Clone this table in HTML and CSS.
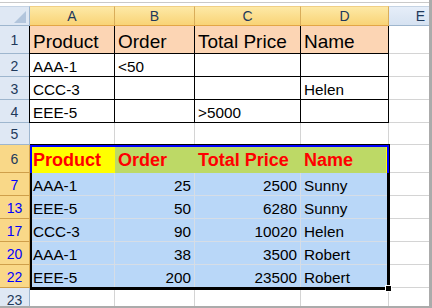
FILE: index.html
```html
<!DOCTYPE html>
<html>
<head>
<meta charset="utf-8">
<link rel="stylesheet" href="styles.css">
</head>
<body>
<div class="frame">
<div class="sheet">
  <div class="topstrip"></div>

  <div class="corner"><span class="tri"></span></div>
  <div class="ch sel">A</div>
  <div class="ch sel">B</div>
  <div class="ch sel">C</div>
  <div class="ch sel">D</div>
  <div class="ch">E</div>

  <div class="rh">1</div>
  <div class="c big peach bl bx">Product</div>
  <div class="c big peach bx">Order</div>
  <div class="c big peach bx">Total Price</div>
  <div class="c big peach bx">Name</div>
  <div class="c"></div>

  <div class="rh">2</div>
  <div class="c bl bx">AAA-1</div>
  <div class="c bx">&lt;50</div>
  <div class="c bx"></div>
  <div class="c bx"></div>
  <div class="c"></div>

  <div class="rh">3</div>
  <div class="c bl bx">CCC-3</div>
  <div class="c bx"></div>
  <div class="c bx"></div>
  <div class="c bx">Helen</div>
  <div class="c"></div>

  <div class="rh">4</div>
  <div class="c bl bx">EEE-5</div>
  <div class="c bx"></div>
  <div class="c bx">&gt;5000</div>
  <div class="c bx"></div>
  <div class="c"></div>

  <div class="rh">5</div>
  <div class="c"></div>
  <div class="c"></div>
  <div class="c"></div>
  <div class="c"></div>
  <div class="c"></div>

  <div class="rh gold">6</div>
  <div class="c head yellow">Product</div>
  <div class="c head green">Order</div>
  <div class="c head green">Total Price</div>
  <div class="c head green">Name</div>
  <div class="c"></div>

  <div class="rh gold filt">7</div>
  <div class="c blue">AAA-1</div>
  <div class="c blue num">25</div>
  <div class="c blue num">2500</div>
  <div class="c blue">Sunny</div>
  <div class="c"></div>

  <div class="rh gold filt">13</div>
  <div class="c blue">EEE-5</div>
  <div class="c blue num">50</div>
  <div class="c blue num">6280</div>
  <div class="c blue">Sunny</div>
  <div class="c"></div>

  <div class="rh gold filt">17</div>
  <div class="c blue">CCC-3</div>
  <div class="c blue num">90</div>
  <div class="c blue num">10020</div>
  <div class="c blue">Helen</div>
  <div class="c"></div>

  <div class="rh gold filt">20</div>
  <div class="c blue">AAA-1</div>
  <div class="c blue num">38</div>
  <div class="c blue num">3500</div>
  <div class="c blue">Robert</div>
  <div class="c"></div>

  <div class="rh gold filt">22</div>
  <div class="c blue">EEE-5</div>
  <div class="c blue num">200</div>
  <div class="c blue num">23500</div>
  <div class="c blue">Robert</div>
  <div class="c"></div>

  <div class="rh">23</div>
  <div class="c"></div>
  <div class="c"></div>
  <div class="c"></div>
  <div class="c"></div>
  <div class="c"></div>

  <div class="selbox"><span class="handle"></span></div>
  <div class="hdrbox"></div>
</div>
</div>
</body>
</html>
```

FILE: styles.css
```css
html, body {
  margin: 0;
  padding: 0;
  background: #ffffff;
}
.frame {
  width: 429px;
  height: 306px;
  overflow: hidden;
  border-right: 3px solid #ababab;
  border-bottom: 2px solid #ababab;
  background: #ffffff;
}
.sheet {
  position: relative;
  display: grid;
  grid-template-columns: 30px 85px 80px 106px 88px 64px;
  grid-template-rows: 6px 20px 28px 23px 23px 23px 22px 28px 23px 23px 23px 23px 23px 24px;
  font-family: "Liberation Sans", Arial, sans-serif;
  color: #000000;
}
.topstrip {
  grid-column: 1 / 7;
  border-top: 1px solid #ffffff;
  border-bottom: 1px solid #c9c9c9;
  height: 1px;
  box-sizing: content-box;
}
.corner {
  background: #dfe8f4;
  border-right: 1px solid #9eb6ce;
  border-bottom: 1px solid #9eb6ce;
  border-top: 1px solid #c5d3e3;
  box-sizing: border-box;
  display: flex;
  justify-content: flex-end;
  align-items: flex-end;
  padding: 0 3px 2px 0;
}
.tri {
  width: 0;
  height: 0;
  border-left: 12px solid transparent;
  border-bottom: 12px solid #b2c5dc;
}
.ch {
  box-sizing: border-box;
  background: linear-gradient(#e6eef9, #d6e2f1);
  border-right: 1px solid #9eb6ce;
  border-bottom: 1px solid #9eb6ce;
  border-top: 1px solid #c5d3e3;
  color: #1e395b;
  font-size: 14px;
  display: flex;
  align-items: center;
  justify-content: center;
}
.ch.sel {
  background: linear-gradient(#fde9a6, #f9d376);
  border-right-color: #d9ad5a;
  border-bottom-color: #e3a646;
  border-top-color: #f0cf85;
}
.rh {
  box-sizing: border-box;
  background: #dfe8f4;
  border-right: 1px solid #9eb6ce;
  border-bottom: 1px solid #9eb6ce;
  color: #1e395b;
  font-size: 14px;
  display: flex;
  align-items: center;
  justify-content: center;
  padding-top: 1px;
}
.rh.gold {
  background: #f9d888;
  border-right-color: #d9a94e;
  border-bottom-color: #cf9f4a;
}
.rh.filt {
  color: #0000ff;
}
.c {
  box-sizing: border-box;
  border-right: 1px solid #d4d4d4;
  border-bottom: 1px solid #d4d4d4;
  font-size: 15.3px;
  line-height: 1;
  display: flex;
  align-items: flex-end;
  padding: 0 3px 2px 3px;
  white-space: nowrap;
  overflow: hidden;
}
.c.big {
  font-size: 19px;
  padding-bottom: 2px;
}
.c.bx {
  border-right-color: #000000;
  border-bottom-color: #000000;
}
.c.bl {
  box-shadow: -1px 0 0 #000000;
}
.peach {
  background: #fcd5b4;
}
.c.head {
  font-size: 18px;
  font-weight: bold;
  color: #ff0000;
  padding-bottom: 3px;
  border-color: transparent;
}
.yellow {
  background: #ffff00;
}
.green {
  background: #bdd966;
}
.c.blue {
  background: #b9d7f8;
  border-right-color: #d6dde6;
  border-bottom-color: #d6dde6;
}
.c.num {
  justify-content: flex-end;
}
.selbox {
  position: absolute;
  grid-column: 2 / 6;
  grid-row: 8 / 14;
  top: -1px;
  left: 0;
  right: -1px;
  bottom: -2px;
  border-top: 1px solid #000000;
  border-left: 2px solid #000000;
  border-right: 3px solid #000000;
  border-bottom: 3px solid #000000;
  pointer-events: none;
}
.handle {
  position: absolute;
  right: -5px;
  bottom: -5px;
  width: 5px;
  height: 5px;
  background: #000000;
  border: 1px solid #ffffff;
}
.hdrbox {
  position: absolute;
  grid-column: 2 / 6;
  grid-row: 8 / 9;
  top: 0;
  left: 0;
  right: 0;
  bottom: 0;
  border-top: 2px solid #0000ff;
  border-left: 2px solid #0000ff;
  border-right: 2px solid #0000ff;
  box-shadow: inset -1px 0 0 #ffff00;
  pointer-events: none;
}
```
